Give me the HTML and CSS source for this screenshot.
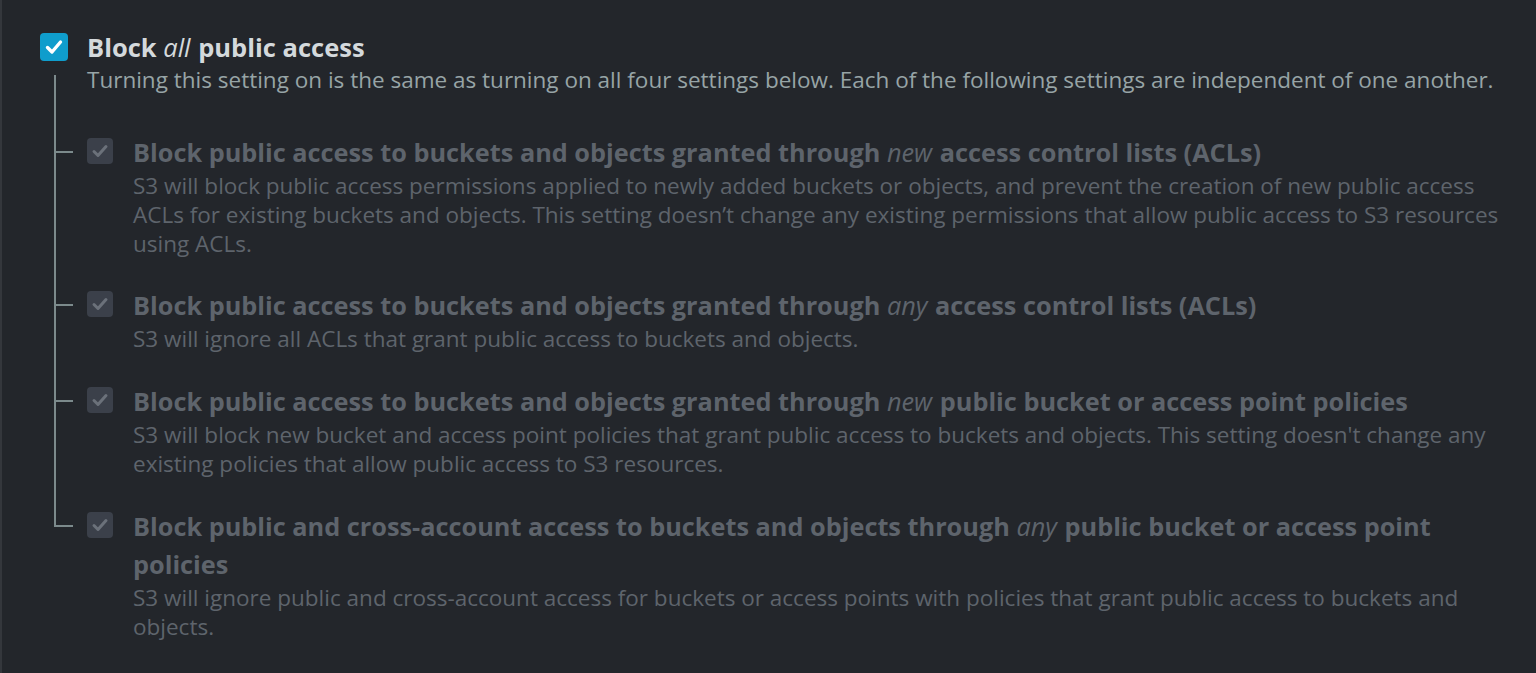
FILE: index.html
```html
<!DOCTYPE html>
<html lang="en">
<head>
<meta charset="utf-8">
<title>Block public access</title>
<link rel="stylesheet" href="styles.css">
</head>
<body>
<div class="panel">
  <div class="group">
    <div class="main-row">
      <span class="cb cb-main">
        <svg viewBox="0 0 28 28" width="28" height="28"><path d="M7.5 14.5l4.5 4.5 8.5-10" fill="none" stroke="#fff" stroke-width="3.4" stroke-linecap="round" stroke-linejoin="round"/></svg>
      </span>
      <h2 class="main-title">Block <em>all</em> public access</h2>
    </div>
    <div class="main-desc-row">
      <span class="trunk-top"></span>
      <p class="main-desc">Turning this setting on is the same as turning on all four settings below. Each of the following settings are independent of one another.</p>
    </div>
    <ul class="tree">
      <li class="item">
        <span class="conn"><span class="branch"></span></span>
        <span class="cb cb-sub"><svg viewBox="0 0 26 26" width="26" height="26"><path d="M7 13.5l4 4 8-9" fill="none" stroke="#6b717a" stroke-width="3" stroke-linecap="round" stroke-linejoin="round"/></svg></span>
        <div class="body">
          <h3 class="sub-title">Block public access to buckets and objects granted through <em>new</em> access control lists (ACLs)</h3>
          <p class="sub-desc">S3 will block public access permissions applied to newly added buckets or objects, and prevent the creation of new public access ACLs for existing buckets and objects. This setting doesn’t change any existing permissions that allow public access to S3 resources using ACLs.</p>
        </div>
      </li>
      <li class="item">
        <span class="conn"><span class="branch"></span></span>
        <span class="cb cb-sub"><svg viewBox="0 0 26 26" width="26" height="26"><path d="M7 13.5l4 4 8-9" fill="none" stroke="#6b717a" stroke-width="3" stroke-linecap="round" stroke-linejoin="round"/></svg></span>
        <div class="body">
          <h3 class="sub-title">Block public access to buckets and objects granted through <em>any</em> access control lists (ACLs)</h3>
          <p class="sub-desc">S3 will ignore all ACLs that grant public access to buckets and objects.</p>
        </div>
      </li>
      <li class="item">
        <span class="conn"><span class="branch"></span></span>
        <span class="cb cb-sub"><svg viewBox="0 0 26 26" width="26" height="26"><path d="M7 13.5l4 4 8-9" fill="none" stroke="#6b717a" stroke-width="3" stroke-linecap="round" stroke-linejoin="round"/></svg></span>
        <div class="body">
          <h3 class="sub-title">Block public access to buckets and objects granted through <em>new</em> public bucket or access point policies</h3>
          <p class="sub-desc">S3 will block new bucket and access point policies that grant public access to buckets and objects. This setting doesn't change any existing policies that allow public access to S3 resources.</p>
        </div>
      </li>
      <li class="item last">
        <span class="conn"><span class="branch"></span></span>
        <span class="cb cb-sub"><svg viewBox="0 0 26 26" width="26" height="26"><path d="M7 13.5l4 4 8-9" fill="none" stroke="#6b717a" stroke-width="3" stroke-linecap="round" stroke-linejoin="round"/></svg></span>
        <div class="body">
          <h3 class="sub-title">Block public and cross-account access to buckets and objects through <em>any</em> public bucket or access point policies</h3>
          <p class="sub-desc">S3 will ignore public and cross-account access for buckets or access points with policies that grant public access to buckets and objects.</p>
        </div>
      </li>
    </ul>
  </div>
</div>
</body>
</html>
```

FILE: styles.css
```css
* { box-sizing: border-box; }
html, body { margin: 0; padding: 0; }
body {
  background: #23262b;
  font-family: "Open Sans", "Noto Sans", sans-serif;
  height: 673px;
  overflow: hidden;
}
.panel {
  border-left: 2px solid #34373c;
  min-height: 673px;
  padding: 32px 36px 0 38px;
}
.group { display: flex; flex-direction: column; }
.main-row { display: flex; align-items: center; gap: 19px; height: 30px; }
.cb { display: inline-flex; flex: none; border-radius: 4px; }
.cb-main { width: 28px; height: 28px; background: #0f9dcc; }
.cb-sub { width: 26px; height: 26px; background: #3b404a; margin-top: 5px; border-radius: 4px; }
.main-title {
  margin: 0;
  font-size: 25.5px;
  line-height: 30px;
  font-weight: 700;
  color: #d4d9dc;
}
.main-title em, .sub-title em { font-weight: 400; font-style: italic; padding-right: 1px; }
.main-desc-row { display: flex; margin-top: 4px; }
.trunk-top {
  flex: none;
  width: 33px;
  margin-left: 14px;
  margin-top: 9px;
  border-left: 2px solid #7c8a8c;
}
.main-desc {
  margin: 0;
  padding-bottom: 39px;
  font-size: 22.5px;
  line-height: 28px;
  color: #97a4a6;
}
.tree { list-style: none; margin: 0; padding: 0 0 0 14px; }
.item { display: flex; }
.conn {
  flex: none;
  width: 33px;
  border-left: 2px solid #7c8a8c;
}
.branch {
  display: block;
  width: 17px;
  height: 20px;
  border-bottom: 2px solid #7c8a8c;
}
.last .conn { border-left: none; }
.last .branch { border-left: 2px solid #7c8a8c; width: 19px; }
.body { margin-left: 20px; padding-bottom: 29px; }
.item:nth-child(1) .body { padding-bottom: 28px; }
.last .body { padding-bottom: 0; }
.sub-title {
  margin: 0;
  font-size: 25.3px;
  line-height: 38px;
  font-weight: 700;
  color: #5e646c;
}
.sub-desc {
  margin: 0;
  font-size: 22.5px;
  line-height: 29px;
  color: #5e646c;
}
```
